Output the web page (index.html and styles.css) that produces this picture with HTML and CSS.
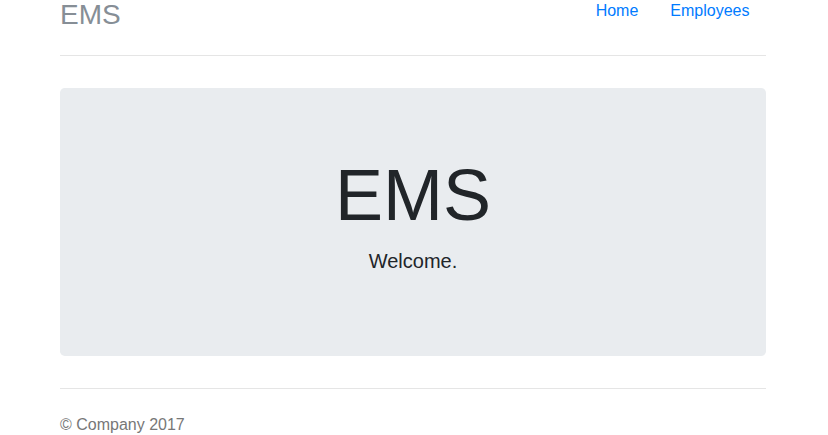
FILE: index.html
```html
<!DOCTYPE html>
<html lang="en">
<head>
<meta charset="utf-8">
<title>EMS</title>
<link rel="stylesheet" href="styles.css">
</head>
<body>
<div class="container">
  <header class="header">
    <h3 class="brand">EMS</h3>
    <nav>
      <ul class="nav">
        <li><a class="nav-link" href="#">Home</a></li>
        <li><a class="nav-link" href="#">Employees</a></li>
      </ul>
    </nav>
  </header>
  <main class="jumbotron">
    <h1 class="display">EMS</h1>
    <p class="lead">Welcome.</p>
  </main>
  <footer class="footer">
    <p>© Company 2017</p>
  </footer>
</div>
</body>
</html>
```
FILE: styles.css
```css
* { box-sizing: border-box; }
html, body {
  margin: 0;
  padding: 0;
  background: #fff;
}
body {
  font-family: "Liberation Sans", Arial, sans-serif;
  font-size: 16px;
  line-height: 1.5;
  color: #212529;
}
.container {
  width: 706px;
  margin: 0 0 0 60px;
}
.header {
  display: flex;
  justify-content: space-between;
  align-items: flex-start;
  padding-bottom: 25px;
  border-bottom: 1px solid #e5e5e5;
  margin-bottom: 32px;
}
.brand {
  margin: 0;
  font-size: 28px;
  font-weight: 500;
  line-height: 30px;
  color: #868e96;
}
.nav {
  display: flex;
  list-style: none;
  margin: 0;
  padding: 0 0.5px 0 0;
}
.nav-link {
  display: block;
  padding: 0 16px;
  line-height: 22px;
  color: #007bff;
  text-decoration: none;
}
.jumbotron {
  display: block;
  background: #e9ecef;
  border-radius: 4.8px;
  padding: 64px 32px 64px;
  margin-bottom: 32px;
  text-align: center;
}
.display {
  margin: 0 0 8px;
  font-size: 72px;
  font-weight: 300;
  line-height: 1.2;
}
.lead {
  margin: 0 0 16px;
  font-size: 20px;
  font-weight: 300;
  line-height: 30px;
}
.footer {
  border-top: 1px solid #e5e5e5;
  padding-top: 24px;
  color: #777;
}
.footer p {
  margin: 0 0 16px;
}
```
